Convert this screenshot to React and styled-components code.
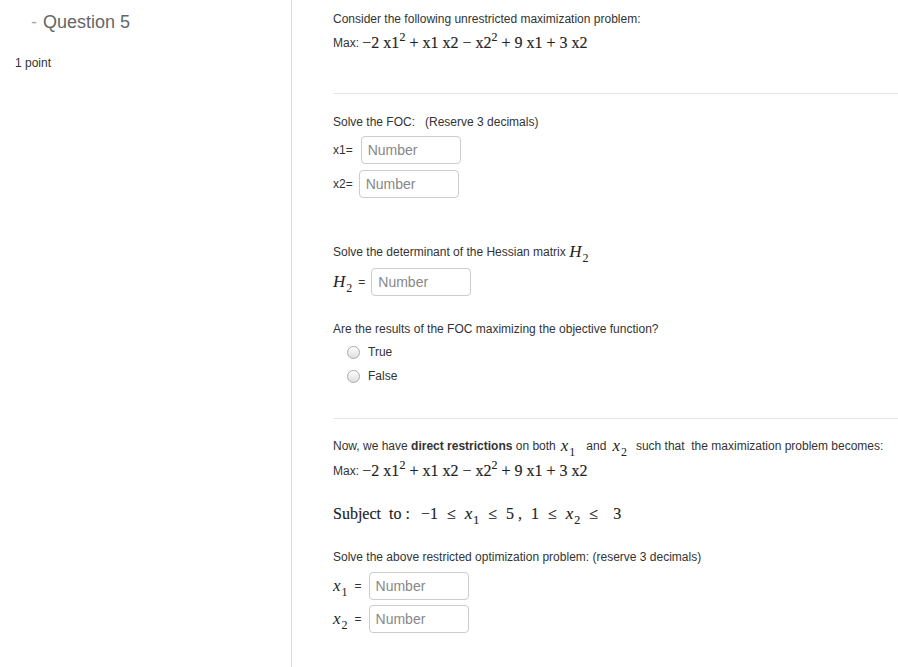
import React from "react";
import styled, { createGlobalStyle } from "styled-components";

const Global = createGlobalStyle`
  html, body {
    margin: 0;
    padding: 0;
    background: #fff;
  }
  body {
    font-family: "Liberation Sans", Arial, sans-serif;
    color: #333;
  }
`;

const Page = styled.div`
  display: flex;
  min-height: 667px;
`;

const Side = styled.div`
  width: 291px;
  flex-shrink: 0;
  border-right: 1px solid #ddd;
  box-sizing: content-box;
`;

const QTitle = styled.h2`
  margin: 0;
  padding: 10px 0 0 31px;
  font-size: 18px;
  font-weight: normal;
  color: #666;
  line-height: 24px;
`;

const Dash = styled.span`
  color: #aaa;
  margin-right: 6px;
`;

const Points = styled.div`
  padding: 22px 0 0 15px;
  font-size: 12px;
  color: #333;
`;

const Main = styled.div`
  flex: 1;
  padding: 11px 0 0 41px;
  font-size: 12px;
`;

const Block = styled.div`
  display: flex;
  flex-direction: column;
  gap: ${(p) => p.gap || 6}px;
  padding-bottom: ${(p) => p.pb || 0}px;
`;

const Divider = styled.hr`
  border: 0;
  border-top: 1px solid #e5e5e5;
  margin: 0 0 ${(p) => p.mb || 20}px 0;
`;

const Line = styled.div`
  display: flex;
  align-items: center;
  height: ${(p) => p.h || 20}px;
  white-space: pre;
`;

const Math = styled.span`
  font-family: "Liberation Serif", "DejaVu Serif", serif;
  font-size: 16px;
  color: #222;
  -webkit-text-stroke: 0.15px #222;
  margin-left: ${(p) => p.ml || 0}px;
`;

const Constraint = styled.div`
  display: flex;
  align-items: center;
  gap: 9px;
  height: 22px;
  font-family: "Liberation Serif", "DejaVu Serif", serif;
  font-size: 16px;
  color: #222;
  -webkit-text-stroke: 0.15px #222;
  white-space: pre;
`;

const Var = styled.i`
  font-family: "Liberation Serif", "DejaVu Serif", serif;
  font-size: 17px;
  font-style: italic;
  color: #222;
  margin: 0 ${(p) => p.mr || 0}px 0 ${(p) => p.ml || 0}px;
`;

const Sub = styled.sub`
  font-size: 12px;
  font-style: normal;
  vertical-align: -5px;
  line-height: 0;
  margin-left: 1px;
`;

const Sup = styled.sup`
  font-size: 12px;
  vertical-align: 7px;
  line-height: 0;
`;

const Bold = styled.b`
  font-weight: bold;
`;

const FieldRow = styled.label`
  display: flex;
  align-items: center;
  gap: ${(p) => p.gap || 6}px;
  height: 28px;
`;

const NumInput = styled.input`
  width: 100px;
  height: 28px;
  box-sizing: border-box;
  border: 1px solid #ccc;
  border-radius: 4px;
  padding: 0 6px;
  font-family: "Liberation Sans", Arial, sans-serif;
  font-size: 14px;
  color: #333;
  outline: none;
  &::placeholder {
    color: #888;
  }
`;

const Options = styled.div`
  display: flex;
  flex-direction: column;
  gap: 8px;
  padding-left: 14px;
`;

const Option = styled.label`
  display: flex;
  align-items: center;
  gap: 8px;
  height: 16px;
  font-size: 12px;
`;

const Radio = styled.span`
  width: 11px;
  height: 11px;
  border-radius: 50%;
  border: 1px solid #aaa;
  background: linear-gradient(#fff, #ddd);
`;

const Wide = styled.span`
  margin-left: ${(p) => p.ml || 0}px;
`;

const X = ({ n, ml, mr }) => (
  <Var ml={ml} mr={mr}>
    x<Sub>{n}</Sub>
  </Var>
);

const Objective = () => (
  <Line h={20}>
    Max: <Math>−2 x1<Sup>2</Sup> + x1 x2 − x2<Sup>2</Sup> + 9 x1 + 3 x2</Math>
  </Line>
);

export default function App() {
  return (
    <>
      <Global />
      <Page>
        <Side>
          <QTitle>
            <Dash>-</Dash>Question 5
          </QTitle>
          <Points>1 point</Points>
        </Side>
        <Main>
          <Block gap={6} pb={40}>
            <Line h={16}>Consider the following unrestricted maximization problem:</Line>
            <Objective />
          </Block>
          <Divider mb={19} />
          <Block gap={6} pb={43}>
            <Line h={17}>Solve the FOC:   (Reserve 3 decimals)</Line>
            <FieldRow gap={8}>
              x1= <NumInput placeholder="Number" />
            </FieldRow>
            <FieldRow gap={6}>
              x2= <NumInput placeholder="Number" />
            </FieldRow>
          </Block>
          <Block gap={5} pb={23}>
            <Line h={22}>
              Solve the determinant of the Hessian matrix{" "}
              <Var>
                H<Sub>2</Sub>
              </Var>
            </Line>
            <FieldRow gap={6}>
              <Var>
                H<Sub>2</Sub>
              </Var>
              <span>=</span>
              <NumInput placeholder="Number" />
            </FieldRow>
          </Block>
          <Block gap={5} pb={34}>
            <Line h={20}>Are the results of the FOC maximizing the objective function?</Line>
            <Options>
              <Option>
                <Radio />
                True
              </Option>
              <Option>
                <Radio />
                False
              </Option>
            </Options>
          </Block>
          <Divider mb={17} />
          <Block gap={5} pb={22}>
            <Line h={20}>
              Now, we have <Bold>direct restrictions</Bold> on both
              <X n={1} ml={5} mr={11} />
              and
              <X n={2} ml={6} mr={9} />
              such that  the maximization problem becomes:
            </Line>
            <Objective />
          </Block>
          <Block pb={22}>
            <Constraint>
              <span>Subject  to :</span>
              <Wide ml={2}>−1</Wide>
              <span>≤</span>
              <X n={1} />
              <span>≤</span>
              <span>5 ,</span>
              <span>1</span>
              <span>≤</span>
              <X n={2} />
              <span>≤</span>
              <Wide ml={6}>3</Wide>
            </Constraint>
          </Block>
          <Block gap={5}>
            <Line h={20}>Solve the above restricted optimization problem: (reserve 3 decimals)</Line>
            <FieldRow gap={7}>
              <X n={1} />
              <span>=</span>
              <NumInput placeholder="Number" />
            </FieldRow>
            <FieldRow gap={7}>
              <X n={2} />
              <span>=</span>
              <NumInput placeholder="Number" />
            </FieldRow>
          </Block>
        </Main>
      </Page>
    </>
  );
}
